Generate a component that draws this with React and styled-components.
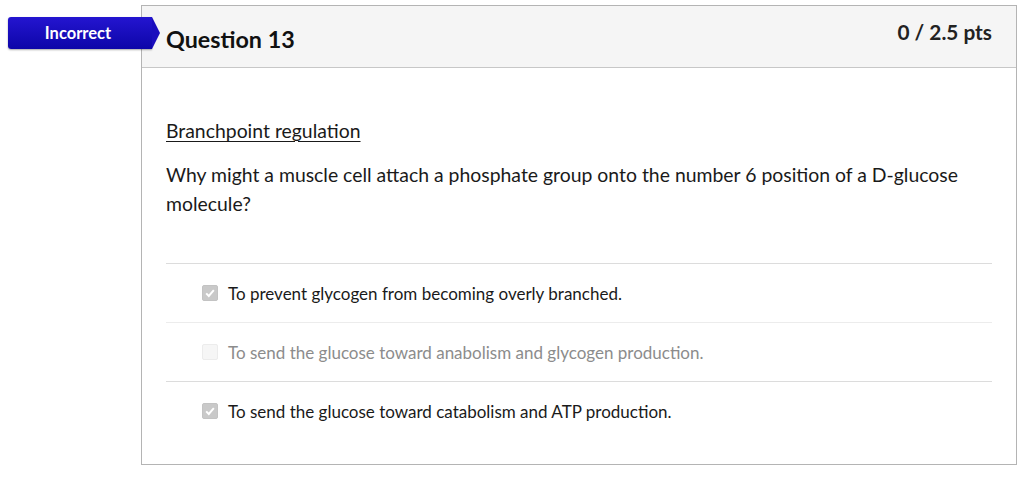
import React from "react";
import styled, { createGlobalStyle } from "styled-components";

const GlobalStyle = createGlobalStyle`
  body {
    margin: 0;
    background: #ffffff;
    font-family: Lato, "Noto Sans", sans-serif;
    color: #1f1f1f;
  }
`;

const Page = styled.div`
  position: relative;
  width: 1024px;
  height: 478px;
  padding: 5px 0 0 141px;
  box-sizing: border-box;
`;

// the ribbon sits over the card's left edge
const Badge = styled.div`
  position: absolute;
  left: 8px;
  top: 17px;
  width: 144px;
  height: 32px;
  display: flex;
  align-items: center;
  justify-content: center;
  padding-right: 4px;
  box-sizing: border-box;
  color: #fff;
  font-size: 16.5px;
  font-weight: 700;
  border-radius: 3px 0 0 3px;
  background: linear-gradient(#2415d0, #0d05a8);
  box-shadow: 0 1px 2px rgba(0, 0, 0, 0.35);

  &::after {
    content: "";
    position: absolute;
    right: -8px;
    top: 0;
    border-top: 16px solid transparent;
    border-bottom: 16px solid transparent;
    border-left: 8px solid #1a0dbd;
  }
`;

const Card = styled.section`
  width: 876px;
  height: 460px;
  border: 1px solid #b4b4b4;
  box-sizing: border-box;
  background: #fff;
`;

const Header = styled.header`
  height: 62px;
  box-sizing: border-box;
  display: flex;
  justify-content: space-between;
  padding: 0 24px 0 24px;
  background: #f5f5f5;
  border-bottom: 1px solid #c7c7c7;
`;

const Title = styled.h2`
  margin: 0;
  padding-top: 18px;
  font-size: 23.3px;
  line-height: 30px;
  font-weight: 700;
  color: #111;
`;

const Points = styled.div`
  padding-top: 13px;
  font-size: 20.8px;
  line-height: 26px;
  font-weight: 700;
  color: #222;
`;

const Body = styled.div`
  padding: 48px 24px 0 24px;
`;

const Topic = styled.p`
  margin: 0;
  font-size: 19.4px;
  line-height: 29px;
  text-decoration: underline;
  text-decoration-thickness: 1px;
  text-underline-offset: 3px;
  color: #1a1a1a;
`;

const Prompt = styled.p`
  margin: 15px 0 0;
  font-size: 19.4px;
  line-height: 29px;
  color: #1a1a1a;
`;

const Answers = styled.ul`
  list-style: none;
  margin: 45px 0 0;
  padding: 0;
`;

const Answer = styled.li`
  height: 59px;
  box-sizing: border-box;
  display: flex;
  align-items: center;
  gap: 10px;
  padding-left: 36px;
  border-top: 1px solid ${(p) => (p.$faint ? "#ececec" : "#dcdcdc")};
  font-size: 17px;
  color: ${(p) => (p.$picked ? "#1a1a1a" : "#8c8c8c")};
`;

const Box = styled.span`
  width: 16px;
  height: 16px;
  border-radius: 2px;
  display: flex;
  align-items: center;
  justify-content: center;
  background: ${(p) => (p.$checked ? "#c9c9c9" : "#f6f6f6")};
  border: 1px solid ${(p) => (p.$checked ? "#c3c3c3" : "#ececec")};
  box-sizing: border-box;
`;

const answers = [
  { text: "To prevent glycogen from becoming overly branched.", picked: true },
  { text: "To send the glucose toward anabolism and glycogen production.", picked: false, faint: true },
  { text: "To send the glucose toward catabolism and ATP production.", picked: true },
];

function Check() {
  return (
    <svg width="12" height="12" viewBox="0 0 11 11">
      <path d="M2 5.8 L4.4 8.2 L9 2.8" fill="none" stroke="#fff" strokeWidth="1.8" />
    </svg>
  );
}

export default function App() {
  return (
    <>
      <GlobalStyle />
      <Page>
        <Badge>Incorrect</Badge>
        <Card>
          <Header>
            <Title>Question 13</Title>
            <Points>0 / 2.5 pts</Points>
          </Header>
          <Body>
            <Topic>Branchpoint regulation</Topic>
            <Prompt>
              Why might a muscle cell attach a phosphate group onto the number 6 position of a D-glucose
              molecule?
            </Prompt>
            <Answers>
              {answers.map((a) => (
                <Answer key={a.text} $picked={a.picked} $faint={a.faint}>
                  <Box $checked={a.picked}>{a.picked && <Check />}</Box>
                  {a.text}
                </Answer>
              ))}
            </Answers>
          </Body>
        </Card>
      </Page>
    </>
  );
}
